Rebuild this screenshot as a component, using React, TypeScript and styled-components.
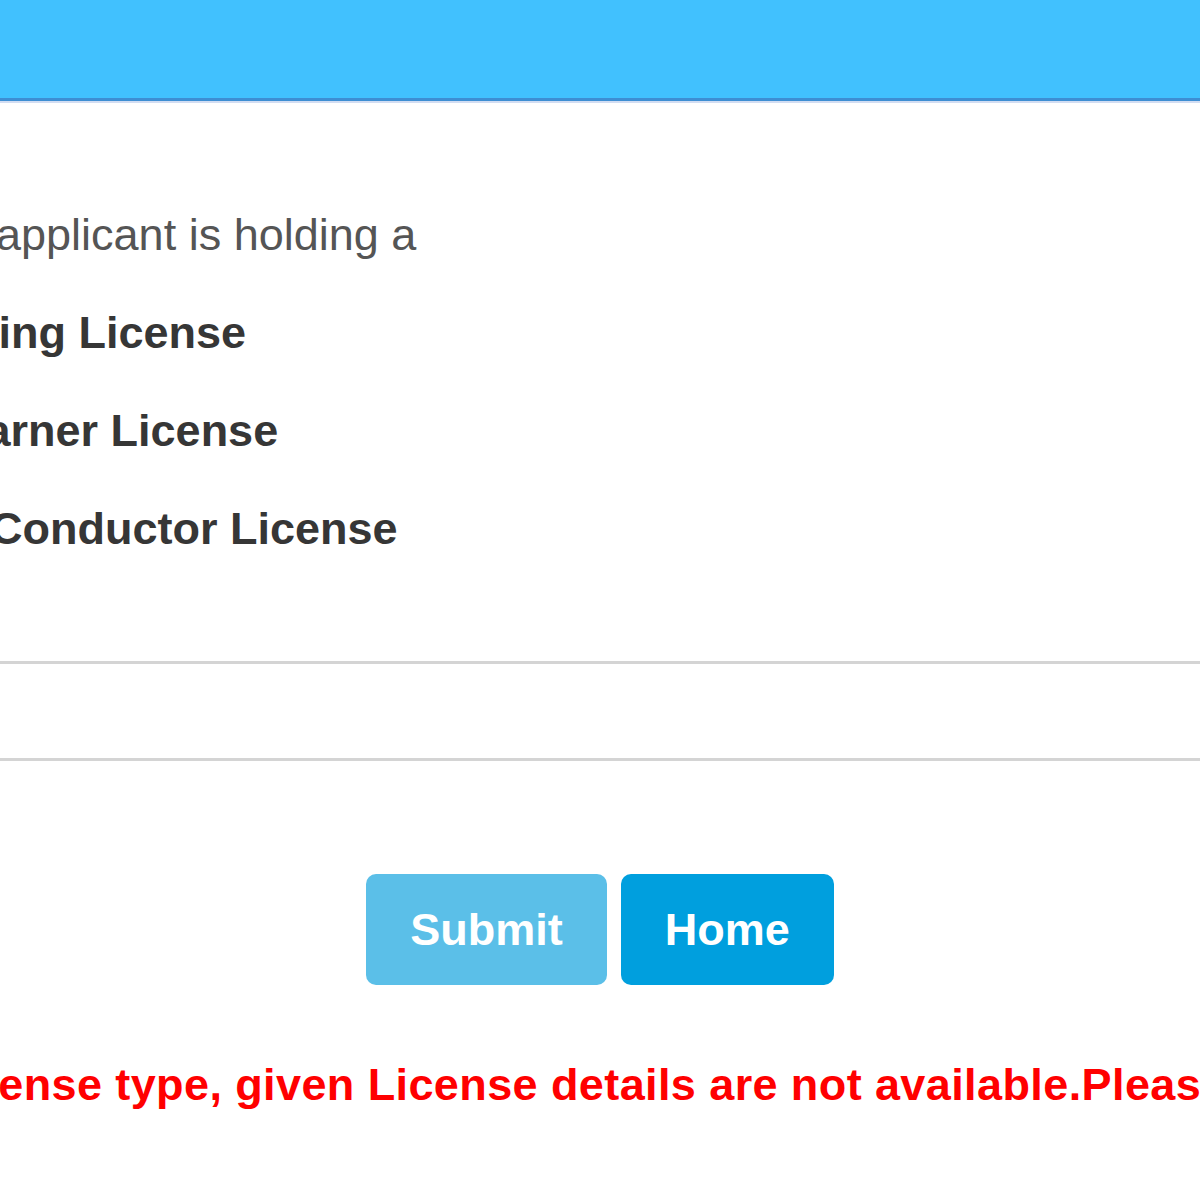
import styled, { createGlobalStyle } from "styled-components";

const GlobalStyle = createGlobalStyle`
  html, body {
    margin: 0;
    padding: 0;
    background: #ffffff;
    overflow: hidden;
  }
  body {
    font-family: "Liberation Sans", Arial, Helvetica, sans-serif;
  }
`;

const Page = styled.div`
  width: 1200px;
  height: 1200px;
  overflow: hidden;
  background: #ffffff;
`;

const Header = styled.header`
  height: 98px;
  background: #41c1fe;
  border-bottom: 3px solid #3d8ed3;
  box-shadow: 0 2px 0 #d2ddf2;
`;

const Form = styled.section`
  padding-top: 85px;
`;

const Question = styled.p`
  margin: 0 0 0 -4px;
  font-size: 45px;
  line-height: 98px;
  color: #555555;
  white-space: nowrap;
`;

const Options = styled.div`
  display: flex;
  flex-direction: column;
`;

const Option = styled.label<{ $shift: number }>`
  display: block;
  margin-left: ${(p) => p.$shift}px;
  font-size: 45px;
  font-weight: bold;
  line-height: 98px;
  color: #363636;
  white-space: nowrap;
`;

const EmptyRow = styled.div`
  margin-top: 83px;
  height: 94px;
  border-top: 3px solid #d4d4d4;
  border-bottom: 3px solid #d4d4d4;
`;

const Actions = styled.div`
  display: flex;
  justify-content: center;
  gap: 14px;
  margin-top: 113px;
`;

const Button = styled.button<{ $muted?: boolean }>`
  height: 111px;
  padding: 0 44px;
  border: none;
  border-radius: 10px;
  background: ${(p) => (p.$muted ? "#5bbfe8" : "#009fde")};
  color: #ffffff;
  font-family: "Liberation Sans", Arial, sans-serif;
  font-size: 45px;
  font-weight: bold;
  cursor: pointer;
`;

const ErrorLine = styled.p`
  margin: 70px 0 0 -68px;
  font-size: 45px;
  font-weight: bold;
  line-height: 60px;
  letter-spacing: 0.4px;
  color: #ff0000;
  white-space: nowrap;
`;

const licenseTypes = [
  { label: "Driving License", shift: -89 },
  { label: "Learner License", shift: -67 },
  { label: "Conductor License", shift: -10 },
];

export default function App() {
  return (
    <Page>
      <GlobalStyle />
      <Header />
      <Form>
        <Question>applicant is holding a</Question>
        <Options>
          {licenseTypes.map((t) => (
            <Option key={t.label} $shift={t.shift}>
              {t.label}
            </Option>
          ))}
        </Options>
        <EmptyRow />
        <Actions>
          <Button $muted disabled>
            Submit
          </Button>
          <Button>Home</Button>
        </Actions>
        <ErrorLine>
          License type, given License details are not available.Please try again
        </ErrorLine>
      </Form>
    </Page>
  );
}
